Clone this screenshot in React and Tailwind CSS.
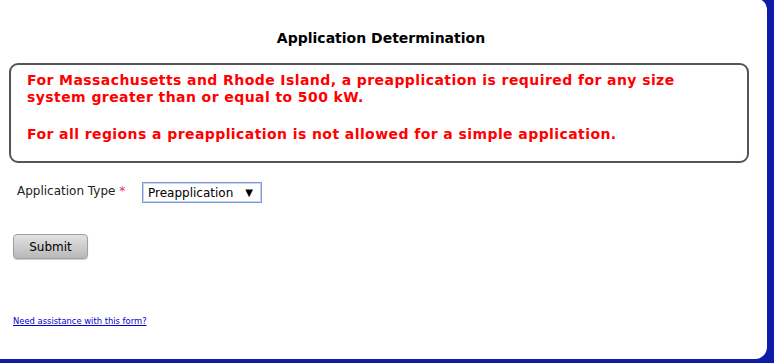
export default function App() {
  return (
    <div className="w-[774px] h-[363px] bg-[#0c1ba9] overflow-hidden" style={{ fontFamily: '"DejaVu Sans", Verdana, sans-serif' }}>
      <div className="w-[767px] h-[361px] -mt-[2px] bg-white rounded-r-[12px] pt-[32px]">
        <div className="w-[762px] text-center font-bold text-[14px] leading-[17px] text-black">Application Determination</div>
        <div className="ml-[9px] mt-[16px] w-[740px] h-[100px] border-2 border-[#555] rounded-[9px] pl-[16px] pt-[7px] text-[#ff0000] font-bold text-[14px] leading-[17px] tracking-[0.42px]">
          <p>For Massachusetts and Rhode Island, a preapplication is required for any size<br />system greater than or equal to 500 kW.</p>
          <p className="mt-[20px]">For all regions a preapplication is not allowed for a simple application.</p>
        </div>
        <div className="flex items-start mt-[19px] ml-[17px]">
          <div className="text-[12px] leading-[16px] text-[#222] mt-[1px] w-[125px]">
            Application Type <span className="text-[#e8276b]">*</span>
          </div>
          <div className="w-[120px] h-[21px] border border-[#7a9ad6] shadow-[inset_0_0_0_1px_#c9d6ef] flex items-center justify-between pl-[5px] pr-[8px] text-[12px] text-black">
            <span>Preapplication</span>
            <span className="text-[10px]">▼</span>
          </div>
        </div>
        <button className="block ml-[13px] mt-[31px] w-[75px] h-[25px] rounded-[4px] border border-[#a0a0a0] bg-gradient-to-b from-[#e2e2e2] to-[#b8b8b8] text-[12px] text-black shadow-[0_1px_1px_rgba(0,0,0,0.2)]">
          Submit
        </button>
        <a href="#" className="block ml-[13px] mt-[57px] text-[8.4px] leading-[10px] text-[#0000cc] underline w-fit">Need assistance with this form?</a>
      </div>
    </div>
  );
}
